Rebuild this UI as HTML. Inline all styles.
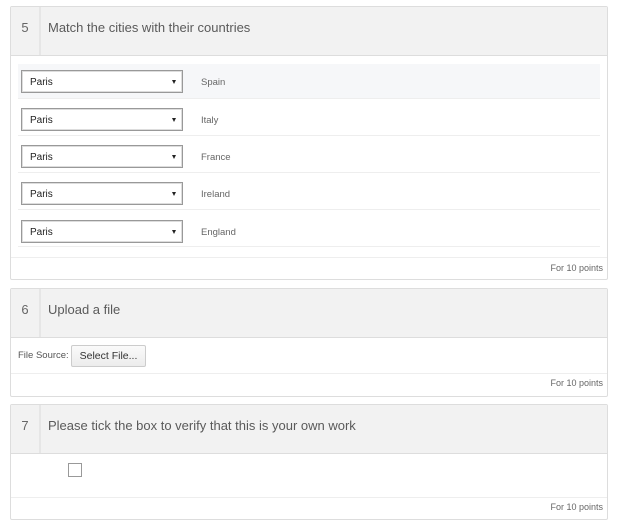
<!DOCTYPE html>
<html><head><meta charset="utf-8"><style>
*{box-sizing:border-box;margin:0;padding:0}
body{width:622px;height:531px;background:#fff;position:relative;font-family:"Liberation Sans",sans-serif;color:#555;overflow:hidden}
.p{position:absolute;left:10px;width:598px;border:1px solid #ddd;border-radius:2px;background:#fff}
.h{position:absolute;left:0;top:0;right:0;height:49px;background:#f2f2f2;border-bottom:1px solid #ddd}
.n{position:absolute;left:0;top:0;width:30px;height:48px;border-right:2px solid #e6e6e6;text-align:center;line-height:42px;font-size:13px;color:#666}
.t{position:absolute;left:37px;top:0;line-height:42px;font-size:13px;color:#5a5a5a}
.f{position:absolute;right:4px;font-size:9px;color:#666}
.fl{position:absolute;left:0;right:0;height:1px;background:#eee}
.s{position:absolute;left:10px;width:162px;height:23px;border:1px solid #999;box-shadow:inset 0 0 0 1px #ddd;background:#fff;font-size:10px;color:#222;padding-left:8px;line-height:23px}
.s:after{content:"";position:absolute;right:6px;top:9px;border-left:2.5px solid transparent;border-right:2.5px solid transparent;border-top:4px solid #222}
.c{position:absolute;left:190px;font-size:9.5px;color:#666}
.rl{position:absolute;left:7px;width:582px;height:1px;background:#eee}
</style></head><body>
<div class="p" style="top:6px;height:274px">
 <div class="h"><div class="n">5</div><div class="t">Match the cities with their countries</div></div>
 <div style="position:absolute;left:7px;top:57px;width:582px;height:34px;background:#f6f7f9"></div>
 <div class="s" style="top:63px">Paris</div><div class="c" style="top:70px">Spain</div>
 <div class="rl" style="top:91px"></div>
 <div class="s" style="top:101px">Paris</div><div class="c" style="top:108px">Italy</div>
 <div class="rl" style="top:128px"></div>
 <div class="s" style="top:138px">Paris</div><div class="c" style="top:145px">France</div>
 <div class="rl" style="top:165px"></div>
 <div class="s" style="top:175px">Paris</div><div class="c" style="top:182px">Ireland</div>
 <div class="rl" style="top:202px"></div>
 <div class="s" style="top:213px">Paris</div><div class="c" style="top:220px">England</div>
 <div class="rl" style="top:239px"></div>
 <div class="fl" style="top:250px"></div>
 <div class="f" style="top:256px">For 10 points</div>
</div>
<div class="p" style="top:288px;height:109px">
 <div class="h"><div class="n">6</div><div class="t">Upload a file</div></div>
 <div style="position:absolute;left:7px;top:61px;font-size:9.5px;color:#555">File Source:</div>
 <div style="position:absolute;left:60px;top:56px;width:75px;height:22px;border:1px solid #ccc;border-radius:2px;background:linear-gradient(#fafafa,#ececec);font-size:10.5px;color:#333;text-align:center;line-height:20px">Select File...</div>
 <div class="fl" style="top:84px"></div>
 <div class="f" style="top:89px">For 10 points</div>
</div>
<div class="p" style="top:404px;height:116px">
 <div class="h"><div class="n">7</div><div class="t">Please tick the box to verify that this is your own work</div></div>
 <div style="position:absolute;left:57px;top:58px;width:14px;height:14px;border:1.5px solid #999;background:#fff"></div>
 <div class="fl" style="top:92px"></div>
 <div class="f" style="top:97px">For 10 points</div>
</div>
</body></html>
